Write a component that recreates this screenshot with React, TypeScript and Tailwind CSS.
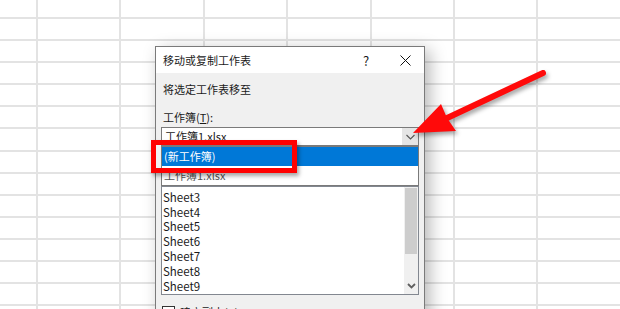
const sheets = ['Sheet3', 'Sheet4', 'Sheet5', 'Sheet6', 'Sheet7', 'Sheet8', 'Sheet9'];

function Grid() {
  const cells = Array.from({ length: 9 * 15 });
  return (
    <div className="grid grid-cols-[38px_repeat(8,83.4px)] grid-rows-[19px_repeat(14,22.1px)]">
      {cells.map((_, i) => (
        <div key={i} className="border-r-2 border-b-2 border-[#e3e3e3]" />
      ))}
    </div>
  );
}

function Chevron({ className = '' }: { className?: string }) {
  return (
    <svg width="9" height="6" viewBox="0 0 9 6" className={className}>
      <path d="M0.5 1 L4.5 5 L8.5 1" fill="none" stroke="currentColor" strokeWidth="1.1" />
    </svg>
  );
}

function Dialog() {
  return (
    <div className="absolute left-[155px] top-[46px] h-[280px] w-[270px] border border-[#7a7a7a] bg-[#f0f0f0] font-['Noto_Sans_CJK_SC',sans-serif] text-[11px] text-[#1a1a1a] shadow-[5px_4px_16px_rgba(0,0,0,0.28)]">
      {/* title bar */}
      <div className="flex h-[26px] items-center bg-white">
        <span className="flex-1 pl-[7px] leading-none">移动或复制工作表</span>
        <span className="w-[40px] text-center text-[13px] leading-none">?</span>
        <span className="flex w-[38px] justify-center">
          <svg width="11" height="11" viewBox="0 0 11 11">
            <path d="M0.5 0.5 L10.5 10.5 M10.5 0.5 L0.5 10.5" stroke="#111" strokeWidth="1" />
          </svg>
        </span>
      </div>

      <div className="px-[5px]">
        <div className="mt-[8px] pl-[2px] leading-[16px]">将选定工作表移至</div>
        <div className="mt-[12px] pl-[2px] leading-[16px]">
          工作簿(<span className="underline">T</span>):
        </div>

        {/* combo */}
        <div className="mt-[2px] flex h-[19px] items-center border border-[#7a7a7a] bg-white">
          <span className="flex-1 pl-[3px] leading-none">工作簿1.xlsx</span>
          <span className="flex h-full w-[16px] items-center justify-center bg-[#e5e5e5] text-[#555]">
            <Chevron />
          </span>
        </div>

        {/* dropdown list */}
        <div className="border border-[#7a7a7a] bg-white">
          <div className="flex h-[19px] items-center bg-[#0078d7] pl-[2px] text-white">(新工作簿)</div>
          <div className="flex h-[19px] items-center pl-[2px] text-[#555]">工作簿1.xlsx</div>
        </div>

        {/* sheets list */}
        <div className="flex h-[109px] border border-[#828790] bg-white">
          <div className="flex-1 pt-[3px] pl-[1px]">
            {sheets.map((s) => (
              <div key={s} className="flex h-[14.8px] items-center text-[11.5px]">
                {s}
              </div>
            ))}
          </div>
          <div className="flex w-[14px] flex-col bg-[#f0f0f0]">
            <div className="mx-px mt-px h-[66px] bg-[#cdcdcd]" />
            <div className="flex-1" />
            <div className="flex h-[16px] items-center justify-center text-[#606060]">
              <svg width="9" height="6" viewBox="0 0 9 6">
                <path d="M1 1 L4.5 4.5 L8 1" fill="none" stroke="currentColor" strokeWidth="1.8" />
              </svg>
            </div>
          </div>
        </div>

        {/* copy checkbox */}
        <div className="mt-[11px] flex items-center gap-[5px] pl-[1px]">
          <span className="h-[13px] w-[13px] border border-[#333] bg-white" />
          <span className="leading-[13px]">
            建立副本(<span className="underline">C</span>)
          </span>
        </div>
      </div>
    </div>
  );
}

export default function App() {
  return (
    <div className="relative h-[309px] w-[620px] overflow-hidden bg-white">
      <Grid />
      <Dialog />

      {/* red highlight box */}
      <div className="absolute left-[151px] top-[140px] h-[33px] w-[146px] border-[5px] border-[#ff0000] shadow-[2px_3px_4px_rgba(0,0,0,0.35)]" />

      {/* red arrow */}
      <svg
        width="620"
        height="309"
        viewBox="0 0 620 309"
        className="pointer-events-none absolute left-0 top-0 drop-shadow-[2px_3px_2px_rgba(0,0,0,0.35)]"
      >
        <line x1="543" y1="73" x2="445" y2="119" stroke="#ff0a0a" strokeWidth="6" strokeLinecap="round" />
        <polygon points="413,133 441,104 447,118 456,131" fill="#ff0a0a" />
      </svg>
    </div>
  );
}
